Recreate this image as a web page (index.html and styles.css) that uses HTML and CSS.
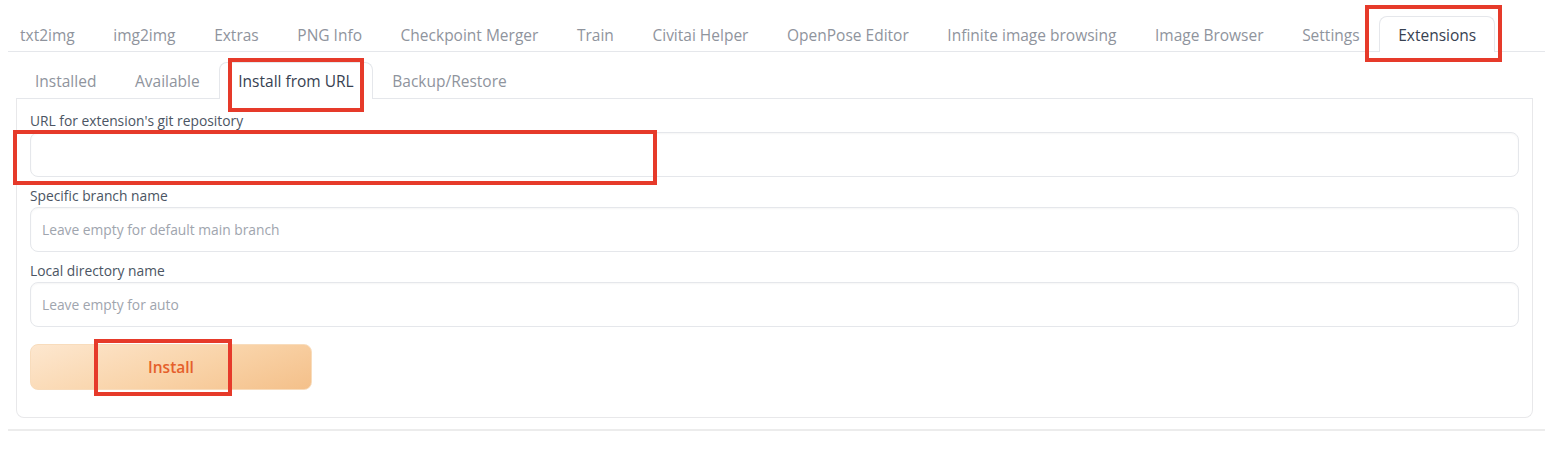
FILE: index.html
```html
<!DOCTYPE html>
<html lang="en">
<head>
<meta charset="utf-8">
<title>Extensions</title>
<link rel="stylesheet" href="styles.css">
</head>
<body>
<div class="app">
  <div class="tabnav top">
    <button class="tab">txt2img</button>
    <button class="tab">img2img</button>
    <button class="tab">Extras</button>
    <button class="tab">PNG Info</button>
    <button class="tab">Checkpoint Merger</button>
    <button class="tab">Train</button>
    <button class="tab">Civitai Helper</button>
    <button class="tab">OpenPose Editor</button>
    <button class="tab">Infinite image browsing</button>
    <button class="tab">Image Browser</button>
    <button class="tab">Settings</button>
    <button class="tab selected">Extensions</button>
  </div>
  <div class="tabcontent">
    <div class="tabnav sub">
      <button class="tab">Installed</button>
      <button class="tab">Available</button>
      <button class="tab selected">Install from URL</button>
      <button class="tab">Backup/Restore</button>
    </div>
    <div class="panel">
      <div class="field">
        <label class="label">URL for extension's git repository</label>
        <input class="textbox" type="text">
      </div>
      <div class="field">
        <label class="label">Specific branch name</label>
        <input class="textbox" type="text" placeholder="Leave empty for default main branch">
      </div>
      <div class="field">
        <label class="label">Local directory name</label>
        <input class="textbox" type="text" placeholder="Leave empty for auto">
      </div>
      <button class="install">Install</button>
    </div>
  </div>
</div>
<div class="mark mark-ext"></div>
<div class="mark mark-url-tab"></div>
<div class="mark mark-url-input"></div>
<div class="mark mark-install"></div>
</body>
</html>
```

FILE: styles.css
```css
* { box-sizing: border-box; }

body {
  margin: 0;
  position: relative;
  background: #ffffff;
  font-family: "Open Sans", "Noto Sans", sans-serif;
  color: #374151;
}

.app {
  margin-left: 8px;
  width: 1537px;
  padding-top: 16px;
}

.tabnav {
  display: flex;
  border-bottom: 1px solid #e5e7eb;
}

.tab {
  font-family: inherit;
  font-size: 15.5px;
  color: #8f949d;
  background: transparent;
  border: 1px solid transparent;
  border-bottom: none;
  padding: 0 18.3px;
  margin: 0;
  white-space: nowrap;
  cursor: pointer;
}

.top .tab { height: 35px; line-height: 36px; }
.top .tab:first-child { padding-left: 11px; }

.sub .tab { height: 36px; line-height: 37px; }
.sub .tab:first-child { padding-left: 18px; }

.tab.selected {
  color: #374151;
  background: #ffffff;
  border-color: #e5e7eb;
  border-radius: 8px 8px 0 0;
  margin-bottom: -1px;
  height: 36px;
}

.sub .tab.selected { height: 37px; }

.tabcontent {
  padding: 10px 12px 11px 8px;
  border-bottom: 2px solid #ececec;
}

.panel {
  border: 1px solid #e8e8ea;
  border-top: none;
  border-radius: 0 0 8px 8px;
  padding: 12px 13px 27px;
}

.field {
  display: flex;
  flex-direction: column;
  margin-bottom: 9px;
}

.label {
  font-size: 13.8px;
  line-height: 20px;
  color: #4b5563;
  margin-bottom: 1px;
}

.textbox {
  height: 45px;
  width: 100%;
  border: 1px solid #e5e7eb;
  border-radius: 8px;
  background: #ffffff;
  box-shadow: inset 0 1px 2px rgba(0, 0, 0, 0.04);
  padding: 0 11px;
  font-family: inherit;
  font-size: 13.8px;
  color: #374151;
  outline: none;
}

.textbox::placeholder { color: #a0a5ae; }

.install {
  margin-top: 8px;
  width: 282px;
  height: 46px;
  border: 1px solid #f8dcbc;
  border-radius: 8px;
  background: linear-gradient(160deg, #fde7cf 0%, #f9d3a8 55%, #f4c08a 100%);
  color: #e5602b;
  font-family: inherit;
  font-size: 15.5px;
  font-weight: 600;
  cursor: pointer;
}

.mark {
  position: absolute;
  border: 4px solid #e63a2a;
  pointer-events: none;
}

.mark-ext { left: 1365px; top: 5px; width: 137px; height: 57px; }
.mark-url-tab { left: 228px; top: 58px; width: 136px; height: 54px; }
.mark-url-input { left: 13px; top: 130px; width: 644px; height: 55px; }
.mark-install { left: 94px; top: 339px; width: 138px; height: 57px; }
```
